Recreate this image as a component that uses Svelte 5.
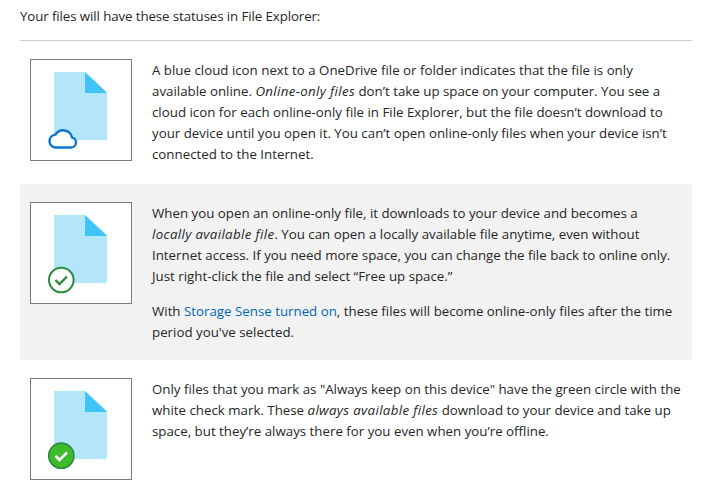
<script>
  const statuses = [
    { id: 'online', shaded: false },
    { id: 'local', shaded: true },
    { id: 'always', shaded: false }
  ];
</script>

<main class="page">
  <p class="intro">Your files will have these statuses in File Explorer:</p>
  <hr />

  {#each statuses as s}
    <section class="row" class:shaded={s.shaded}>
      <div class="thumb">
        <svg width="100" height="100" viewBox="1 1 100 100" aria-hidden="true">
          <path d="M24 13H55L77 33V81H24Z" fill="#b3e5fb" />
          <path d="M55 13L77 34H55Z" fill="#40c3f7" />
          {#if s.id === 'online'}
            <path
              d="M25 88.5H41a5 5 0 0 0 1-9.9a9 9 0 0 0-16.5-3a6.5 6.5 0 0 0-.5 12.9Z"
              fill="#fff"
              stroke="#0b78d0"
              stroke-width="2.4"
            />
          {:else if s.id === 'local'}
            <circle cx="31.3" cy="78" r="12.3" fill="#fff" stroke="#2b8a3e" stroke-width="2" />
            <path d="M25.5 78l4 4l7.5-7.5" fill="none" stroke="#2b8a3e" stroke-width="2.4" />
          {:else}
            <circle cx="31.3" cy="77.7" r="12.6" fill="#3dbb2a" stroke="#2b8a3e" stroke-width="1.6" />
            <path d="M25.5 78l4 4l7.5-7.5" fill="none" stroke="#fff" stroke-width="2.6" />
          {/if}
        </svg>
      </div>

      <div class="body">
        {#if s.id === 'online'}
          <p>
            A blue cloud icon next to a OneDrive file or folder indicates that the file is only<br />
            available online. <em>Online-only files</em> don’t take up space on your computer. You see a<br />
            cloud icon for each online-only file in File Explorer, but the file doesn’t download to<br />
            your device until you open it. You can’t open online-only files when your device isn’t<br />
            connected to the Internet.
          </p>
        {:else if s.id === 'local'}
          <p>
            When you open an online-only file, it downloads to your device and becomes a<br />
            <em>locally available file</em>. You can open a locally available file anytime, even without<br />
            Internet access. If you need more space, you can change the file back to online only.<br />
            Just right-click the file and select “Free up space.”
          </p>
          <p>
            With <a href="#storage">Storage Sense turned on</a>, these files will become online-only files after the time<br />
            period you've selected.
          </p>
        {:else}
          <p>
            Only files that you mark as "Always keep on this device" have the green circle with the<br />
            white check mark. These <em>always available files</em> download to your device and take up<br />
            space, but they’re always there for you even when you’re offline.
          </p>
        {/if}
      </div>
    </section>
  {/each}
</main>

<style>
  :global(body) {
    background: #fff;
  }
  .page {
    width: 708px;
    height: 489px;
    overflow: hidden;
    padding: 0 16px 0 20px;
    box-sizing: border-box;
    font-family: "Open Sans", "Noto Sans", "Liberation Sans", sans-serif;
    font-size: 13.3px;
    line-height: 21px;
    color: #262626;
  }
  .intro {
    margin: 0;
    padding-top: 6px;
    height: 40px;
    box-sizing: border-box;
    letter-spacing: -0.1px;
  }
  hr {
    margin: 0 0 18px;
    border: 0;
    border-top: 1px solid #ccc;
  }
  .row {
    display: flex;
    gap: 20px;
    padding: 0 10px;
    min-height: 107px;
    margin-bottom: 18px;
  }
  .row.shaded {
    padding-top: 18px;
    padding-bottom: 17px;
    background: #f2f2f2;
  }
  .thumb {
    flex: none;
    width: 102px;
    height: 102px;
    box-sizing: border-box;
    border: 1px solid #7a7a7a;
    background: #fff;
  }
  svg {
    display: block;
  }
  .body {
    flex: 1;
    min-width: 0;
    padding-top: 1px;
    white-space: nowrap;
  }
  p {
    margin: 0 0 14px;
  }
  p:last-child {
    margin-bottom: 0;
  }
  em {
    letter-spacing: 0.35px;
  }
  a {
    color: #0067b8;
    text-decoration: none;
  }
</style>
